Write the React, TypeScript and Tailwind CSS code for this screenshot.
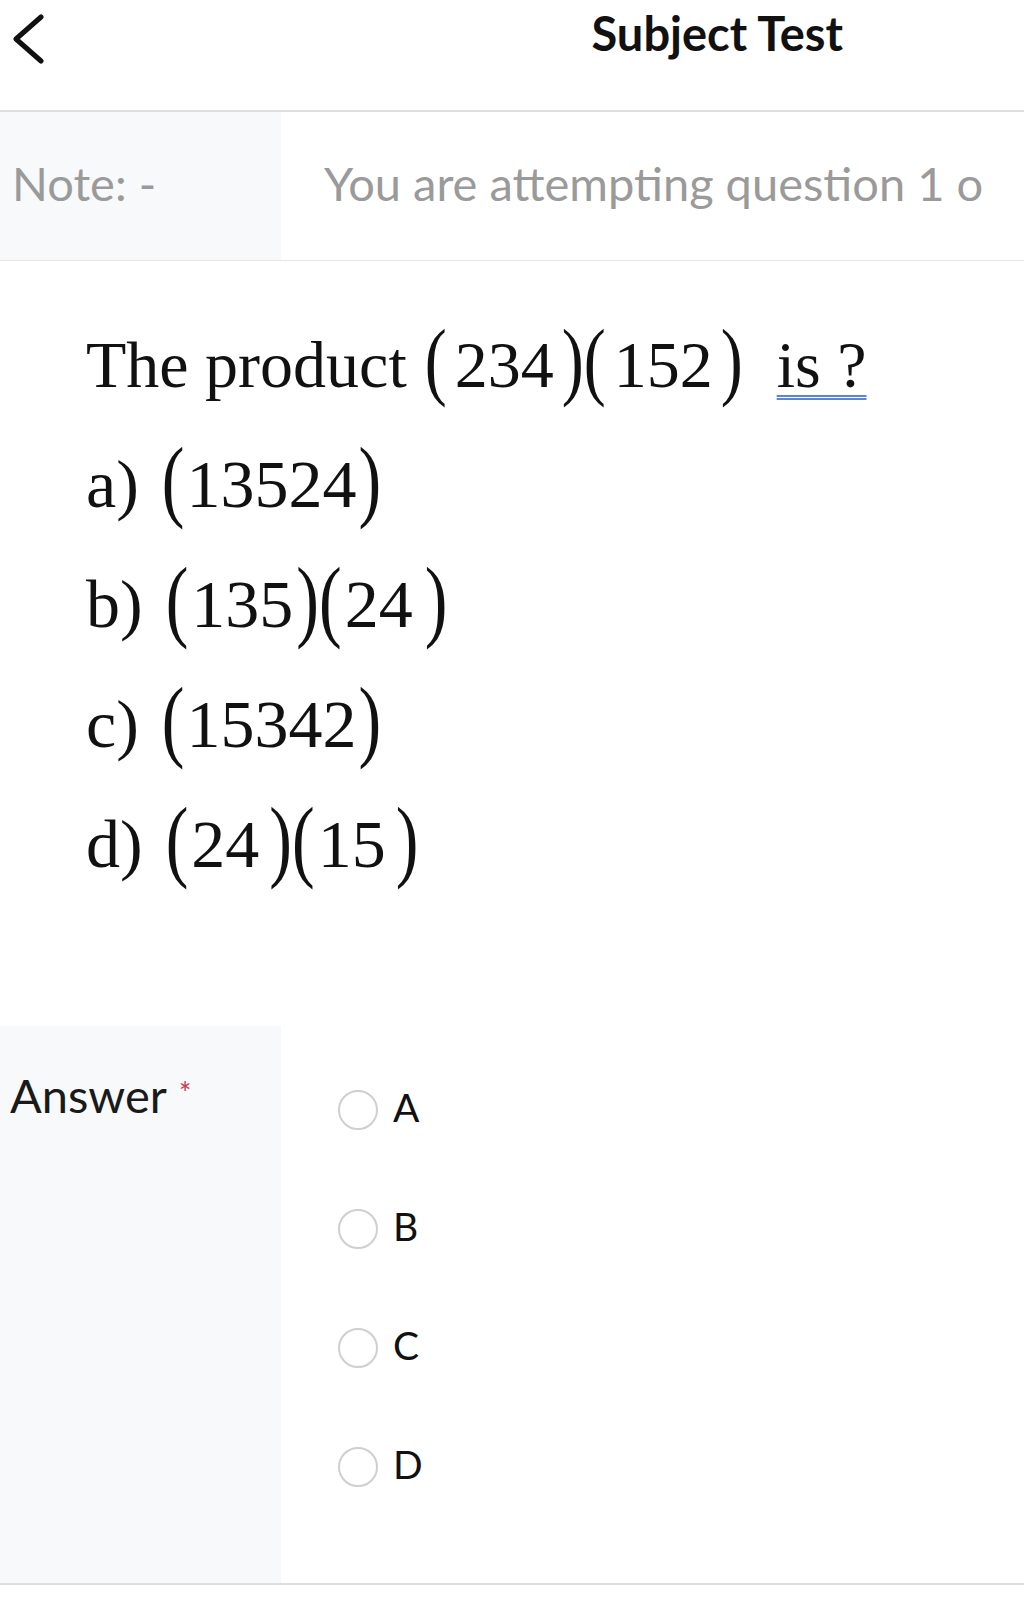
import type { ReactNode } from 'react'

const lato = { fontFamily: 'Lato, "Open Sans", sans-serif' }
const serif = { fontFamily: '"Liberation Serif", "Times New Roman", serif' }

function Paren({ side }: { side: '(' | ')' }) {
    return (
        <span className="inline-block origin-[50%_72%] scale-y-[1.33] leading-none">
            {side}
        </span>
    )
}

function Group({
    children,
    inner = 'mx-[3px]'
}: {
    children: ReactNode
    inner?: string
}) {
    return (
        <span className="inline-flex items-baseline">
            <Paren side="(" />
            <span className={inner}>{children}</span>
            <Paren side=")" />
        </span>
    )
}

function OptionLine({ label, children }: { label: string; children: ReactNode }) {
    return (
        <div className="flex h-[120px] items-baseline text-[68px] leading-[120px] text-[#111]">
            <span>{label}</span>
            <span className="ml-[23px] flex items-baseline">{children}</span>
        </div>
    )
}

function Radio({ letter }: { letter: string }) {
    return (
        <label className="flex h-[119px] items-center gap-[15px]">
            <span className="h-[40px] w-[40px] rounded-full border-2 border-[#cfcfcf] bg-white" />
            <span className="-mt-[5px] text-[39px] leading-none text-[#111]">
                {letter}
            </span>
        </label>
    )
}

export default function App() {
    return (
        <div className="min-h-[1620px] bg-white" style={lato}>
            {/* header */}
            <div className="flex h-[112px] items-start border-b-2 border-[#dedede]">
                <button className="ml-[11px] mt-[14px]" aria-label="Back">
                    <svg width="34" height="50" viewBox="0 0 34 50" fill="none">
                        <polyline
                            points="30,3 5,25 30,47"
                            stroke="#111"
                            strokeWidth="5"
                            strokeLinecap="round"
                            strokeLinejoin="round"
                        />
                    </svg>
                </button>
                <h1 className="ml-auto mr-[181px] mt-[5px] text-[47px] font-bold leading-[56px] text-[#111]">
                    Subject Test
                </h1>
            </div>

            {/* note */}
            <div className="flex h-[149px] border-b border-[#e6e6e6]">
                <div className="flex w-[281px] items-center bg-[#f7f9fa] pb-[6px] pl-[12px] text-[47px] text-[#9a9a9a]">
                    Note: -
                </div>
                <div className="flex flex-1 items-center overflow-hidden whitespace-nowrap pb-[6px] pl-[43px] text-[47px] text-[#9a9a9a]">
                    You are attempting question 1 o
                </div>
            </div>

            {/* question */}
            <div className="mt-[44px] pl-[86px]" style={serif}>
                <div className="flex h-[119px] items-baseline text-[66px] leading-[119px] text-[#111]">
                    <span>The product</span>
                    <span className="ml-[18px] flex items-baseline">
                        <Group inner="mx-[8px]">234</Group>
                        <Group inner="mx-[8px]">152</Group>
                    </span>
                    <span className="ml-[34px] underline decoration-[#5b86d6] decoration-double decoration-2 underline-offset-[8px]">
                        is ?
                    </span>
                </div>
                <OptionLine label="a)">
                    <Group inner="mx-[2px]">13524</Group>
                </OptionLine>
                <OptionLine label="b)">
                    <Group inner="mx-[3px]">135</Group>
                    <Group inner="ml-[3px] mr-[12px]">24</Group>
                </OptionLine>
                <OptionLine label="c)">
                    <Group inner="mx-[2px]">15342</Group>
                </OptionLine>
                <OptionLine label="d)">
                    <Group inner="ml-[3px] mr-[10px]">24</Group>
                    <Group inner="ml-[3px] mr-[10px]">15</Group>
                </OptionLine>
            </div>

            {/* answer */}
            <div className="mt-[122px] flex border-b-2 border-[#dedede]">
                <div className="w-[281px] bg-[#f7f9fa] pl-[10px] pt-[41px]">
                    <span className="text-[47px] leading-[56px] text-[#1a1a1a]">
                        Answer
                    </span>
                    <span className="ml-[12px] align-top text-[30px] leading-[50px] text-[#d4354f]">
                        *
                    </span>
                </div>
                <div className="flex-1 pb-[57px] pl-[57px] pt-[24px]">
                    <Radio letter="A" />
                    <Radio letter="B" />
                    <Radio letter="C" />
                    <Radio letter="D" />
                </div>
            </div>
        </div>
    )
}
